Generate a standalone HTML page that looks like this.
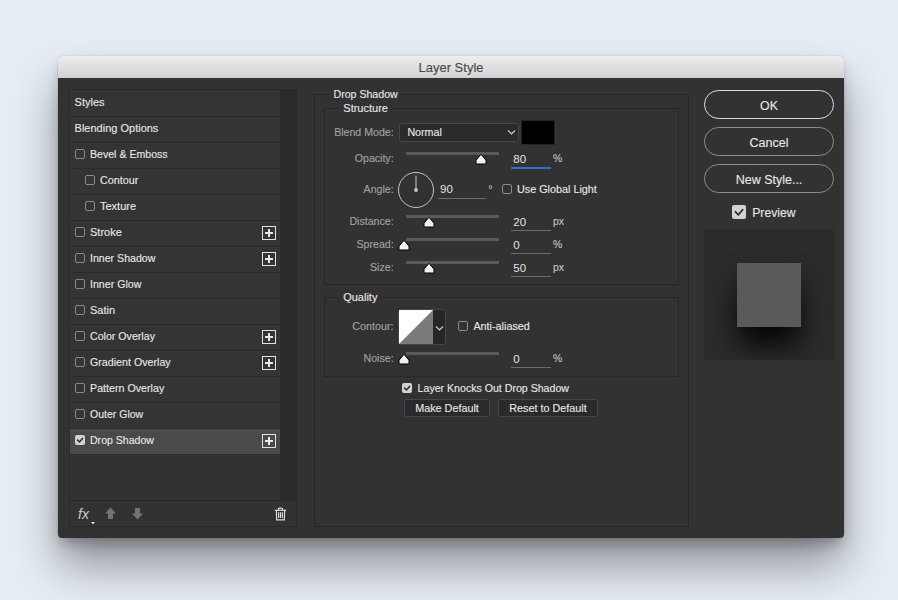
<!DOCTYPE html>
<html><head><meta charset="utf-8"><style>
*{box-sizing:border-box;margin:0;padding:0}
html,body{width:898px;height:600px;overflow:hidden;background:#e7edf5;font-family:"Liberation Sans",sans-serif}
.a{position:absolute}
.t{position:absolute;white-space:nowrap;line-height:1;-webkit-text-stroke:0.12px currentColor}
#dlg{position:absolute;left:58px;top:56px;width:786px;height:482px;background:linear-gradient(#edecee 0,#d5d3d5 21px,#cfcdcf 22px,#323232 22px);border-radius:5px 5px 4px 4px;box-shadow:0 0 1px rgba(0,0,0,.4),0 8px 14px -3px rgba(0,0,0,.28),0 28px 46px rgba(0,0,0,.38)}
#title{position:absolute;left:58px;top:56px;width:786px;height:22px;border-radius:5px 5px 0 0;background:linear-gradient(#ecebec,#d6d4d6)}
.cb{position:absolute;width:10px;height:10px;border:1px solid #8a8a8a;border-radius:2px}
.plus{position:absolute;left:262px;width:14px;height:14px;border:1.2px solid #e2e2e2}
.plus:before{content:"";position:absolute;left:1.8px;top:4.8px;width:8px;height:2px;background:#e8e8e8}
.plus:after{content:"";position:absolute;left:4.8px;top:1.8px;width:2px;height:8px;background:#e8e8e8}
.box{position:absolute;border:1px solid #262626}
.leg{position:absolute;background:#323232}
.track{position:absolute;left:406px;width:93px;height:3px;background:#5b5b5b}
.ul{position:absolute;height:1px;background:#6a6a6a}
.btn{position:absolute;left:704px;width:130px;height:29px;border:1px solid #8c8c8c;border-radius:15px}
.sbtn{position:absolute;height:18px;border:1px solid #474747;border-radius:3px;background:#2a2a2a}
</style></head><body>
<div id="dlg"></div>
<div class="t" style="left:251px;width:400px;text-align:center;top:61.00px;font-size:13px;color:#4a4a4a;">Layer Style</div>
<div class="a" style="left:69px;top:89px;width:228px;height:438px;border:1px solid #2a2a2a;background:#323232"></div>
<div class="a" style="left:280px;top:90px;width:16px;height:410px;background:#2b2b2b"></div>
<div class="a" style="left:70px;top:500px;width:226px;height:1px;background:#282828"></div>
<div class="a" style="left:70px;top:90px;width:210px;height:26px;background:#343434"></div>
<div class="t" style="left:74.6px;top:96.99px;font-size:11px;color:#e8e8e8;">Styles</div>
<div class="a" style="left:70px;top:116px;width:210px;height:26px;background:#343434"></div>
<div class="a" style="left:70px;top:116px;width:210px;height:1px;background:#2b2b2b"></div>
<div class="t" style="left:74.6px;top:122.99px;font-size:11px;color:#e8e8e8;">Blending Options</div>
<div class="a" style="left:70px;top:142px;width:210px;height:26px;background:#343434"></div>
<div class="a" style="left:70px;top:142px;width:210px;height:1px;background:#2b2b2b"></div>
<div class="cb" style="left:75px;top:149px"></div>
<div class="t" style="left:90px;top:149.34px;font-size:10.58px;color:#e8e8e8;">Bevel &amp; Emboss</div>
<div class="a" style="left:70px;top:168px;width:210px;height:26px;background:#343434"></div>
<div class="a" style="left:70px;top:168px;width:210px;height:1px;background:#2b2b2b"></div>
<div class="cb" style="left:85px;top:175px"></div>
<div class="t" style="left:100px;top:175.16px;font-size:10.8px;color:#e8e8e8;">Contour</div>
<div class="a" style="left:70px;top:194px;width:210px;height:26px;background:#343434"></div>
<div class="a" style="left:70px;top:194px;width:210px;height:1px;background:#2b2b2b"></div>
<div class="cb" style="left:85px;top:201px"></div>
<div class="t" style="left:100px;top:200.99px;font-size:11px;color:#e8e8e8;">Texture</div>
<div class="a" style="left:70px;top:220px;width:210px;height:26px;background:#343434"></div>
<div class="a" style="left:70px;top:220px;width:210px;height:1px;background:#2b2b2b"></div>
<div class="cb" style="left:75px;top:227px"></div>
<div class="t" style="left:90px;top:226.99px;font-size:11px;color:#e8e8e8;">Stroke</div>
<div class="plus" style="top:226px"></div>
<div class="a" style="left:70px;top:246px;width:210px;height:26px;background:#343434"></div>
<div class="a" style="left:70px;top:246px;width:210px;height:1px;background:#2b2b2b"></div>
<div class="cb" style="left:75px;top:253px"></div>
<div class="t" style="left:90px;top:253.33px;font-size:10.6px;color:#e8e8e8;">Inner Shadow</div>
<div class="plus" style="top:252px"></div>
<div class="a" style="left:70px;top:272px;width:210px;height:26px;background:#343434"></div>
<div class="a" style="left:70px;top:272px;width:210px;height:1px;background:#2b2b2b"></div>
<div class="cb" style="left:75px;top:279px"></div>
<div class="t" style="left:90px;top:279.31px;font-size:10.62px;color:#e8e8e8;">Inner Glow</div>
<div class="a" style="left:70px;top:298px;width:210px;height:26px;background:#343434"></div>
<div class="a" style="left:70px;top:298px;width:210px;height:1px;background:#2b2b2b"></div>
<div class="cb" style="left:75px;top:305px"></div>
<div class="t" style="left:90px;top:304.99px;font-size:11px;color:#e8e8e8;">Satin</div>
<div class="a" style="left:70px;top:324px;width:210px;height:26px;background:#343434"></div>
<div class="a" style="left:70px;top:324px;width:210px;height:1px;background:#2b2b2b"></div>
<div class="cb" style="left:75px;top:331px"></div>
<div class="t" style="left:90px;top:331.30px;font-size:10.63px;color:#e8e8e8;">Color Overlay</div>
<div class="plus" style="top:330px"></div>
<div class="a" style="left:70px;top:350px;width:210px;height:26px;background:#343434"></div>
<div class="a" style="left:70px;top:350px;width:210px;height:1px;background:#2b2b2b"></div>
<div class="cb" style="left:75px;top:357px"></div>
<div class="t" style="left:90px;top:357.26px;font-size:10.68px;color:#e8e8e8;">Gradient Overlay</div>
<div class="plus" style="top:356px"></div>
<div class="a" style="left:70px;top:376px;width:210px;height:26px;background:#343434"></div>
<div class="a" style="left:70px;top:376px;width:210px;height:1px;background:#2b2b2b"></div>
<div class="cb" style="left:75px;top:383px"></div>
<div class="t" style="left:90px;top:383.25px;font-size:10.69px;color:#e8e8e8;">Pattern Overlay</div>
<div class="a" style="left:70px;top:402px;width:210px;height:26px;background:#343434"></div>
<div class="a" style="left:70px;top:402px;width:210px;height:1px;background:#2b2b2b"></div>
<div class="cb" style="left:75px;top:409px"></div>
<div class="t" style="left:90px;top:409.39px;font-size:10.52px;color:#e8e8e8;">Outer Glow</div>
<div class="a" style="left:70px;top:428px;width:210px;height:26px;background:#4a4a4a"></div>
<div class="a" style="left:70px;top:428px;width:210px;height:1px;background:#2b2b2b"></div>
<div class="a" style="left:75px;top:435px;width:10px;height:10px;background:#d2d2d2;border-radius:2px"></div>
<svg class="a" style="left:75px;top:435px" width="10" height="10"><path d="M2.10 4.60 L4.50 7.00 L7.90 3.00" stroke="#2a2a2a" stroke-width="1.5" fill="none"/></svg>
<div class="t" style="left:90px;top:435.37px;font-size:10.55px;color:#e8e8e8;">Drop Shadow</div>
<div class="plus" style="top:434px"></div>
<div class="a" style="left:70px;top:454px;width:210px;height:1px;background:#2b2b2b"></div>
<div class="t" style="left:78px;top:506.5px;font-style:italic;font-size:14px;color:#cccccc;-webkit-text-stroke:0">fx</div>
<svg class="a" style="left:91px;top:522px" width="4" height="3"><path d="M0 0 H4 L2 2.2Z" fill="#e8e8e8"/></svg>
<svg class="a" style="left:104px;top:507px" width="13" height="13"><path d="M6.5 0.5 L12 6.5 L9 6.5 L9 12 L4 12 L4 6.5 L1 6.5Z" fill="#737373"/></svg>
<svg class="a" style="left:131px;top:507px" width="13" height="13"><path d="M6.5 12.5 L12 6.5 L9 6.5 L9 1 L4 1 L4 6.5 L1 6.5Z" fill="#737373"/></svg>
<svg class="a" style="left:274px;top:507px" width="13" height="14"><g fill="none" stroke="#dedede" stroke-width="1.15"><path d="M0.8 3.3 H12.2"/><path d="M4.4 3.1 V2.1 Q4.4 1.1 5.4 1.1 H7.6 Q8.6 1.1 8.6 2.1 V3.1"/><path d="M2.4 3.5 L2.6 12.8 H10.4 L10.6 3.5"/><path d="M4.6 5.2 V11 M6.5 5.2 V11 M8.4 5.2 V11"/></g></svg>
<div class="box" style="left:314px;top:94px;width:375px;height:433px"></div>
<div class="box" style="left:324px;top:108px;width:355px;height:177px"></div>
<div class="box" style="left:324px;top:297px;width:355px;height:80px"></div>
<div class="leg" style="left:329px;top:89px;width:71px;height:12px"></div>
<div class="t" style="left:333.5px;top:89.13px;font-size:10.6px;color:#e8e8e8;">Drop Shadow</div>
<div class="leg" style="left:338px;top:103px;width:53px;height:12px"></div>
<div class="t" style="left:343.3px;top:102.69px;font-size:11px;color:#e8e8e8;">Structure</div>
<div class="leg" style="left:339px;top:292px;width:41px;height:12px"></div>
<div class="t" style="left:343.2px;top:292.09px;font-size:11px;color:#e8e8e8;">Quality</div>
<div class="t" style="right:504.4px;top:126.63px;font-size:10.6px;color:#a2a2a2;">Blend Mode:</div>
<div class="t" style="right:504.4px;top:153.03px;font-size:10.6px;color:#a2a2a2;">Opacity:</div>
<div class="t" style="right:504.4px;top:184.13px;font-size:10.6px;color:#a2a2a2;">Angle:</div>
<div class="t" style="right:504.4px;top:216.23px;font-size:10.6px;color:#a2a2a2;">Distance:</div>
<div class="t" style="right:504.4px;top:239.03px;font-size:10.6px;color:#a2a2a2;">Spread:</div>
<div class="t" style="right:504.4px;top:261.93px;font-size:10.6px;color:#a2a2a2;">Size:</div>
<div class="t" style="right:504.4px;top:320.96px;font-size:10.8px;color:#a2a2a2;">Contour:</div>
<div class="t" style="right:504.4px;top:353.03px;font-size:10.6px;color:#a2a2a2;">Noise:</div>
<div class="a" style="left:399px;top:123px;width:120px;height:19px;border:1px solid #474747;border-radius:3px;background:#2b2b2b"></div>
<div class="t" style="left:407.4px;top:127.14px;font-size:10.7px;color:#e8e8e8;">Normal</div>
<svg class="a" style="left:507px;top:129px" width="9" height="7"><path d="M1 1.5 L4.5 5 L8 1.5" stroke="#d0d0d0" stroke-width="1.1" fill="none"/></svg>
<div class="a" style="left:521px;top:120px;width:34px;height:25px;background:#000;border:1px solid #242424"></div>
<div class="track" style="top:152px"></div>
<svg class="a" style="left:474px;top:152px" width="14" height="13"><path d="M7 2.3 L12 8.2 V11 Q12 12 11 12 H3 Q2 12 2 11 V8.2Z" fill="#f0f0f0" stroke="#000" stroke-width="1" stroke-linejoin="round"/></svg>
<div class="t" style="left:513.3px;top:153.67px;font-size:11.5px;color:#e4e4e4;-webkit-text-stroke:0">80</div>
<div class="ul" style="left:511px;top:167px;width:40px;background:#2a73d6;height:2px"></div>
<div class="t" style="left:553px;top:154.20px;font-size:10.4px;color:#c4c4c4;">%</div>
<div class="track" style="top:215px"></div>
<svg class="a" style="left:422px;top:215px" width="14" height="13"><path d="M7 2.3 L12 8.2 V11 Q12 12 11 12 H3 Q2 12 2 11 V8.2Z" fill="#f0f0f0" stroke="#000" stroke-width="1" stroke-linejoin="round"/></svg>
<div class="t" style="left:513.3px;top:216.67px;font-size:11.5px;color:#e4e4e4;-webkit-text-stroke:0">20</div>
<div class="ul" style="left:511px;top:230px;width:40px;background:#6b6b6b;"></div>
<div class="t" style="left:553px;top:217.20px;font-size:10.4px;color:#c4c4c4;">px</div>
<div class="track" style="top:238px"></div>
<svg class="a" style="left:397px;top:238px" width="14" height="13"><path d="M7 2.3 L12 8.2 V11 Q12 12 11 12 H3 Q2 12 2 11 V8.2Z" fill="#f0f0f0" stroke="#000" stroke-width="1" stroke-linejoin="round"/></svg>
<div class="t" style="left:513.3px;top:239.67px;font-size:11.5px;color:#e4e4e4;-webkit-text-stroke:0">0</div>
<div class="ul" style="left:511px;top:253px;width:40px;background:#6b6b6b;"></div>
<div class="t" style="left:553px;top:240.20px;font-size:10.4px;color:#c4c4c4;">%</div>
<div class="track" style="top:261px"></div>
<svg class="a" style="left:422px;top:261px" width="14" height="13"><path d="M7 2.3 L12 8.2 V11 Q12 12 11 12 H3 Q2 12 2 11 V8.2Z" fill="#f0f0f0" stroke="#000" stroke-width="1" stroke-linejoin="round"/></svg>
<div class="t" style="left:513.3px;top:262.67px;font-size:11.5px;color:#e4e4e4;-webkit-text-stroke:0">50</div>
<div class="ul" style="left:511px;top:276px;width:40px;background:#6b6b6b;"></div>
<div class="t" style="left:553px;top:263.20px;font-size:10.4px;color:#c4c4c4;">px</div>
<div class="track" style="top:352px"></div>
<svg class="a" style="left:397px;top:352px" width="14" height="13"><path d="M7 2.3 L12 8.2 V11 Q12 12 11 12 H3 Q2 12 2 11 V8.2Z" fill="#f0f0f0" stroke="#000" stroke-width="1" stroke-linejoin="round"/></svg>
<div class="t" style="left:513.3px;top:353.67px;font-size:11.5px;color:#e4e4e4;-webkit-text-stroke:0">0</div>
<div class="ul" style="left:511px;top:367px;width:40px;background:#6b6b6b;"></div>
<div class="t" style="left:553px;top:354.20px;font-size:10.4px;color:#c4c4c4;">%</div>
<svg class="a" style="left:397px;top:171px" width="38" height="38"><circle cx="19" cy="19" r="17.5" fill="none" stroke="#c4c4c4" stroke-width="1"/><path d="M19 19 V4.5" stroke="#c8c8c8" stroke-width="1"/><circle cx="19" cy="19" r="1.9" fill="#c8c8c8"/></svg>
<div class="t" style="left:440px;top:184.27px;font-size:11.5px;color:#e4e4e4;-webkit-text-stroke:0">90</div>
<div class="ul" style="left:438px;top:198px;width:48px"></div>
<div class="t" style="left:488.3px;top:183.79px;font-size:11px;color:#bdbdbd;">&#176;</div>
<div class="cb" style="left:502px;top:184px"></div>
<div class="t" style="left:517px;top:183.76px;font-size:10.8px;color:#e8e8e8;">Use Global Light</div>
<div class="a" style="left:398px;top:309px;width:48px;height:36px;border:1px solid #474747;border-radius:3px;background:#262626"></div>
<svg class="a" style="left:399px;top:310px" width="34" height="34"><rect width="34" height="34" fill="#ffffff"/><path d="M0 34 L34 0 V34Z" fill="#7a7a7a"/></svg>
<svg class="a" style="left:435px;top:325px" width="9" height="7"><path d="M1 1.5 L4.5 5 L8 1.5" stroke="#d0d0d0" stroke-width="1.1" fill="none"/></svg>
<div class="cb" style="left:458px;top:321px"></div>
<div class="t" style="left:473.4px;top:320.96px;font-size:10.8px;color:#e8e8e8;">Anti-aliased</div>
<div class="a" style="left:402px;top:383px;width:10px;height:10px;background:#d2d2d2;border-radius:2px"></div>
<svg class="a" style="left:402px;top:383px" width="10" height="10"><path d="M2.10 4.60 L4.50 7.00 L7.90 3.00" stroke="#2a2a2a" stroke-width="1.5" fill="none"/></svg>
<div class="t" style="left:417.6px;top:383.13px;font-size:10.6px;color:#e8e8e8;">Layer Knocks Out Drop Shadow</div>
<div class="sbtn" style="left:404px;top:399px;width:86px"></div>
<div class="t" style="left:247px;width:400px;text-align:center;top:402.56px;font-size:10.8px;color:#e8e8e8;">Make Default</div>
<div class="sbtn" style="left:498px;top:399px;width:100px"></div>
<div class="t" style="left:348px;width:400px;text-align:center;top:402.56px;font-size:10.8px;color:#e8e8e8;">Reset to Default</div>
<div class="btn" style="top:90px;border-color:#dcdcdc"></div>
<div class="t" style="left:569px;width:400px;text-align:center;top:100.39px;font-size:12.3px;color:#e8e8e8;">OK</div>
<div class="btn" style="top:127px"></div>
<div class="t" style="left:569px;width:400px;text-align:center;top:137.02px;font-size:12.5px;color:#e8e8e8;">Cancel</div>
<div class="btn" style="top:164px"></div>
<div class="t" style="left:569px;width:400px;text-align:center;top:174.02px;font-size:12.5px;color:#e8e8e8;">New Style...</div>
<div class="a" style="left:732px;top:205px;width:14px;height:14px;background:#d2d2d2;border-radius:2px"></div>
<svg class="a" style="left:732px;top:205px" width="14" height="14"><path d="M2.94 6.44 L6.30 9.80 L11.06 4.20" stroke="#2a2a2a" stroke-width="1.75" fill="none"/></svg>
<div class="t" style="left:752.2px;top:206.97px;font-size:12.2px;color:#e8e8e8;">Preview</div>
<div class="a" style="left:704px;top:230px;width:130px;height:130px;background:#2b2b2b;overflow:hidden"><div class="a" style="left:33px;top:33px;width:64px;height:64px;background:#5a5a5a;box-shadow:0 20px 28px -2px rgba(0,0,0,.9)"></div></div>
</body></html>
